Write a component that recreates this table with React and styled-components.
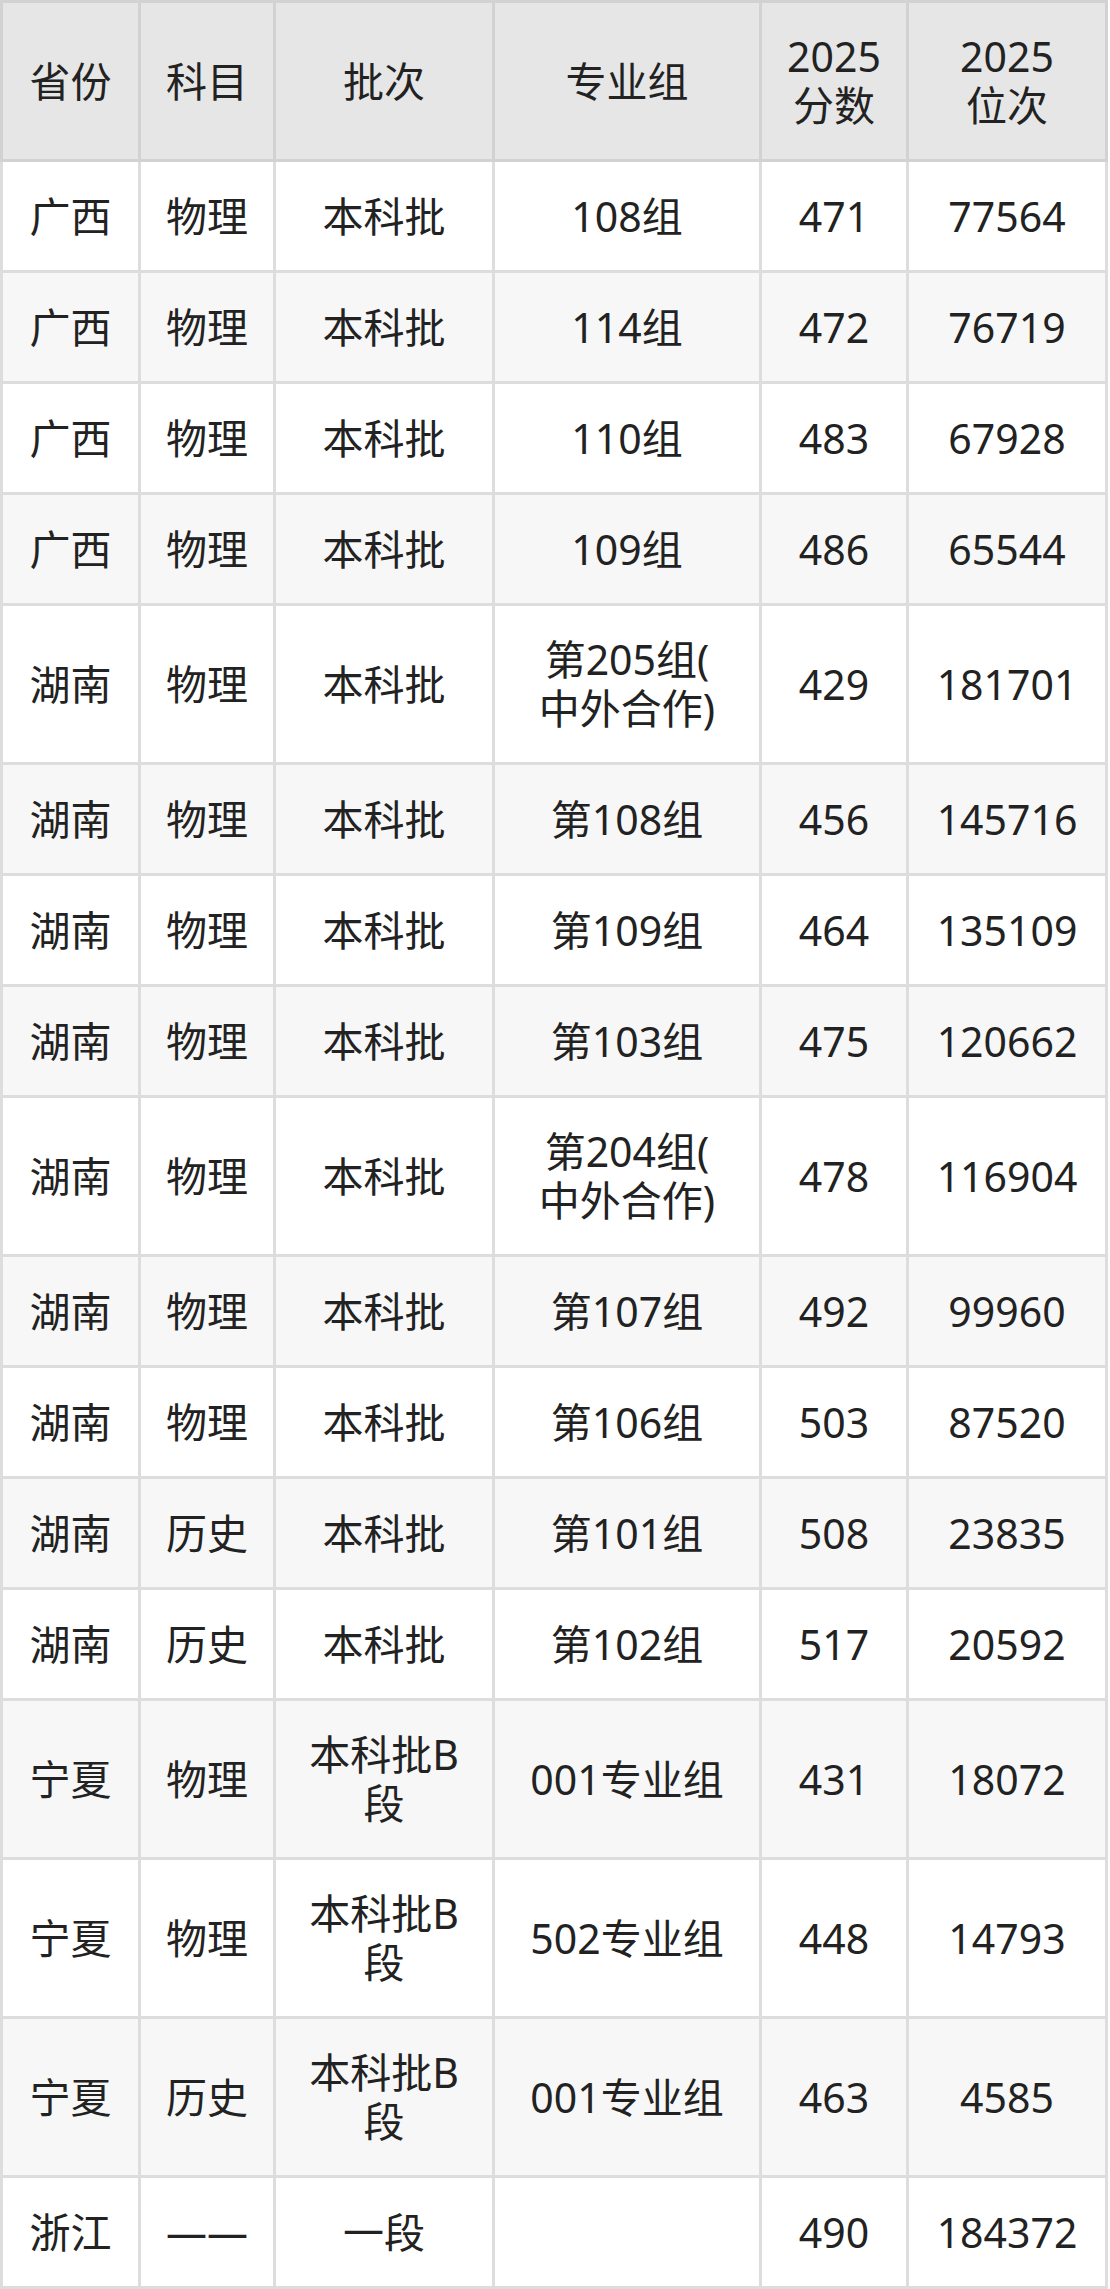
import React from "react";
import styled, { createGlobalStyle } from "styled-components";

const GlobalStyle = createGlobalStyle`
  html, body {
    margin: 0;
    padding: 0;
    background: #ffffff;
  }
  body {
    font-family: "Noto Sans", "Noto Sans CJK SC", sans-serif;
    color: #222222;
  }
`;

const Table = styled.table`
  width: 1108px;
  table-layout: fixed;
  border-collapse: separate;
  border-spacing: 0;
  font-size: 41px;
  line-height: 49px;
`;

const HeadCell = styled.th`
  box-sizing: border-box;
  width: ${(p) => p.$w}px;
  height: 162px;
  padding: 0 4px;
  background: #e6e6e6;
  font-weight: 400;
  text-align: center;
  vertical-align: middle;
  border-top: 3px solid #d2d2d2;
  border-right: 3px solid #d2d2d2;
  border-bottom: 3px solid #d2d2d2;
  &:first-child {
    border-left: 3px solid #d2d2d2;
  }
`;

const Row = styled.tr`
  background: ${(p) => (p.$odd ? "#f7f7f7" : "#ffffff")};
`;

const Cell = styled.td`
  box-sizing: border-box;
  height: ${(p) => (p.$tall ? 159 : 111)}px;
  padding: 0 4px;
  text-align: center;
  vertical-align: middle;
  border-right: 3px solid #dddddd;
  border-bottom: 3px solid #dddddd;
  &:first-child {
    border-left: 3px solid #dddddd;
  }
`;

const columns = [
  { label: "省份", w: 141 },
  { label: "科目", w: 135 },
  { label: "批次", w: 219 },
  { label: "专业组", w: 267 },
  { label: ["2025", "分数"], w: 147 },
  { label: ["2025", "位次"], w: 199 },
];

const rows = [
  ["广西", "物理", "本科批", "108组", "471", "77564"],
  ["广西", "物理", "本科批", "114组", "472", "76719"],
  ["广西", "物理", "本科批", "110组", "483", "67928"],
  ["广西", "物理", "本科批", "109组", "486", "65544"],
  ["湖南", "物理", "本科批", ["第205组(", "中外合作)"], "429", "181701"],
  ["湖南", "物理", "本科批", "第108组", "456", "145716"],
  ["湖南", "物理", "本科批", "第109组", "464", "135109"],
  ["湖南", "物理", "本科批", "第103组", "475", "120662"],
  ["湖南", "物理", "本科批", ["第204组(", "中外合作)"], "478", "116904"],
  ["湖南", "物理", "本科批", "第107组", "492", "99960"],
  ["湖南", "物理", "本科批", "第106组", "503", "87520"],
  ["湖南", "历史", "本科批", "第101组", "508", "23835"],
  ["湖南", "历史", "本科批", "第102组", "517", "20592"],
  ["宁夏", "物理", ["本科批B", "段"], "001专业组", "431", "18072"],
  ["宁夏", "物理", ["本科批B", "段"], "502专业组", "448", "14793"],
  ["宁夏", "历史", ["本科批B", "段"], "001专业组", "463", "4585"],
  ["浙江", "——", "一段", "", "490", "184372"],
];

function Lines({ value }) {
  if (!Array.isArray(value)) return value;
  return value.map((line, i) => (
    <React.Fragment key={i}>
      {i > 0 && <br />}
      {line}
    </React.Fragment>
  ));
}

export default function App() {
  return (
    <>
      <GlobalStyle />
      <Table>
        <thead>
          <tr>
            {columns.map((col, i) => (
              <HeadCell key={i} $w={col.w}>
                <Lines value={col.label} />
              </HeadCell>
            ))}
          </tr>
        </thead>
        <tbody>
          {rows.map((row, r) => {
            const tall = row.some((v) => Array.isArray(v));
            return (
              <Row key={r} $odd={r % 2 === 1}>
                {row.map((v, c) => (
                  <Cell key={c} $tall={tall}>
                    <Lines value={v} />
                  </Cell>
                ))}
              </Row>
            );
          })}
        </tbody>
      </Table>
    </>
  );
}
